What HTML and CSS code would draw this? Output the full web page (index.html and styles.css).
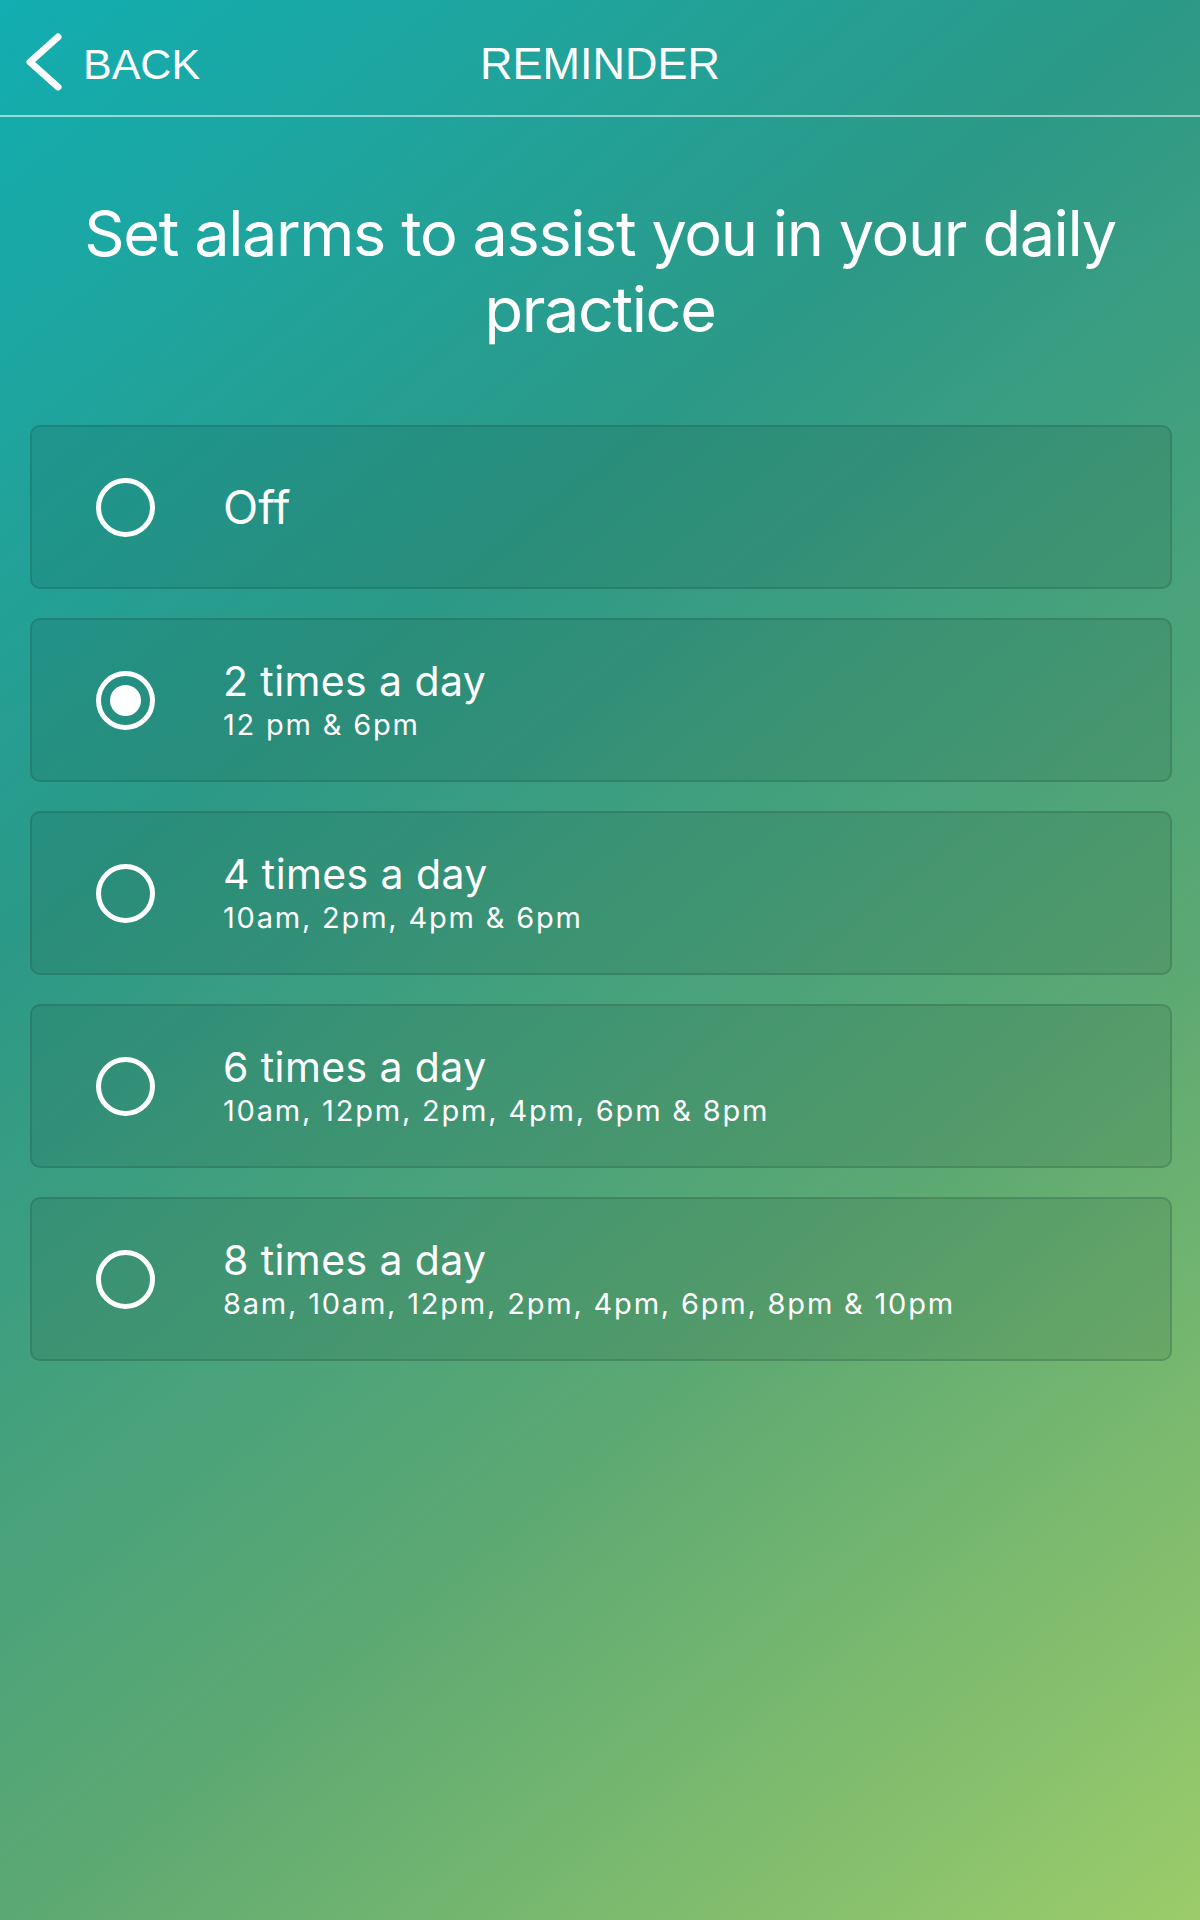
FILE: index.html
```html
<!DOCTYPE html>
<html lang="en">
<head>
    <meta charset="UTF-8">
    <meta name="viewport" content="width=device-width, initial-scale=1.0">
    <title>Reminder</title>
    <link rel="stylesheet" href="styles.css">
</head>
<body>
    <div class="screen">
        <header class="nav-bar">
            <a class="nav-back" href="#">
                <svg class="nav-back-icon" width="40" height="60" viewBox="0 0 40 60">
                    <polyline points="32,5 4,30 32,55" fill="none" stroke="#fff" stroke-width="7" stroke-linecap="round" stroke-linejoin="round"/>
                </svg>
                <span>BACK</span>
            </a>
            <div class="nav-title">REMINDER</div>
            <div></div>
        </header>

        <h1 class="intro">Set alarms to assist you in your daily practice</h1>

        <div class="options">
            <div class="option">
                <span class="radio"></span>
                <div class="option-text">
                    <div class="option-label option-label-big">Off</div>
                </div>
            </div>
            <div class="option">
                <span class="radio checked"></span>
                <div class="option-text">
                    <div class="option-label">2 times a day</div>
                    <div class="option-times">12 pm &amp; 6pm</div>
                </div>
            </div>
            <div class="option">
                <span class="radio"></span>
                <div class="option-text">
                    <div class="option-label">4 times a day</div>
                    <div class="option-times">10am, 2pm, 4pm &amp; 6pm</div>
                </div>
            </div>
            <div class="option">
                <span class="radio"></span>
                <div class="option-text">
                    <div class="option-label">6 times a day</div>
                    <div class="option-times">10am, 12pm, 2pm, 4pm, 6pm &amp; 8pm</div>
                </div>
            </div>
            <div class="option">
                <span class="radio"></span>
                <div class="option-text">
                    <div class="option-label">8 times a day</div>
                    <div class="option-times">8am, 10am, 12pm, 2pm, 4pm, 6pm, 8pm &amp; 10pm</div>
                </div>
            </div>
        </div>
    </div>
</body>
</html>
```

FILE: styles.css
```css
html, body {
    margin: 0;
    padding: 0;
}

body {
    font-family: Inter, "Noto Sans", sans-serif;
    color: #fff;
}

.screen {
    min-height: 1920px;
    background: linear-gradient(141deg, #12aeb1 0%, #2c9987 33%, #5ba873 66%, #9ccc6a 100%);
}

/* Top navigation */
.nav-bar {
    height: 115px;
    display: grid;
    grid-template-columns: 1fr auto 1fr;
    align-items: center;
    border-bottom: 2px solid rgba(255, 255, 255, 0.55);
    font-family: "Liberation Sans", Arial, sans-serif;
}

.nav-back {
    display: flex;
    align-items: center;
    color: #fff;
    text-decoration: none;
    font-size: 43px;
    padding-left: 26px;
    margin-top: 9px;
}

.nav-back span {
    margin-top: 4px;
}

.nav-back-icon {
    display: block;
    margin-right: 17px;
}

.nav-title {
    font-size: 45px;
    margin-top: 13px;
}

/* Heading */
.intro {
    margin: 78px 0 0;
    padding: 0 40px;
    text-align: center;
    font-size: 63px;
    line-height: 76px;
    font-weight: 400;
    letter-spacing: -1.4px;
}

/* Option cards */
.options {
    margin-top: 78px;
    padding: 0 28px 0 30px;
    display: flex;
    flex-direction: column;
    gap: 29px;
}

.option {
    box-sizing: border-box;
    height: 164px;
    display: flex;
    align-items: center;
    padding-left: 64px;
    background: rgba(20, 60, 50, 0.13);
    border: 2px solid rgba(20, 60, 50, 0.18);
    border-radius: 10px;
}

.radio {
    box-sizing: border-box;
    width: 59px;
    height: 59px;
    flex: none;
    border: 5px solid #fff;
    border-radius: 50%;
    display: flex;
    align-items: center;
    justify-content: center;
    margin-right: 68px;
}

.radio.checked::after {
    content: "";
    width: 31px;
    height: 31px;
    border-radius: 50%;
    background: #fff;
}

.option-label {
    font-size: 41px;
    line-height: 48px;
    letter-spacing: 0.4px;
}

.option-label-big {
    font-size: 46px;
    letter-spacing: 0;
}

.option-times {
    font-size: 29px;
    line-height: 36px;
    margin-top: 2px;
    letter-spacing: 1.8px;
}
```
